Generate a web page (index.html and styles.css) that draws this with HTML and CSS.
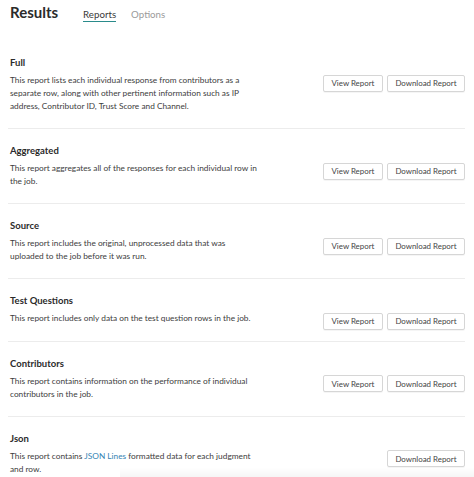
FILE: index.html
```html
<!DOCTYPE html>
<html lang="en">
<head>
  <meta charset="UTF-8" />
  <meta name="viewport" content="width=device-width, initial-scale=1" />
  <title>Results - Reports</title>
  <link rel="stylesheet" href="styles.css">
</head>
<body>

  <div class="header">
    <h1>Results</h1>
    <nav class="tabs">
      <a href="#" class="tab active">Reports</a>
      <a href="#" class="tab">Options</a>
    </nav>
  </div>

  <div class="reports">
    <div class="report">
      <h3>Full</h3>
      <div class="report-body">
        <p>This report lists each individual response from contributors as a separate row, along with other pertinent information such as IP address, Contributor ID, Trust Score and Channel.</p>
        <div class="actions">
          <button>View Report</button>
          <button>Download Report</button>
        </div>
      </div>
    </div>

    <div class="report">
      <h3>Aggregated</h3>
      <div class="report-body">
        <p>This report aggregates all of the responses for each individual row in the job.</p>
        <div class="actions">
          <button>View Report</button>
          <button>Download Report</button>
        </div>
      </div>
    </div>

    <div class="report">
      <h3>Source</h3>
      <div class="report-body">
        <p>This report includes the original, unprocessed data that was uploaded to the job before it was run.</p>
        <div class="actions">
          <button>View Report</button>
          <button>Download Report</button>
        </div>
      </div>
    </div>

    <div class="report">
      <h3>Test Questions</h3>
      <div class="report-body">
        <p>This report includes only data on the test question rows in the job.</p>
        <div class="actions">
          <button>View Report</button>
          <button>Download Report</button>
        </div>
      </div>
    </div>

    <div class="report">
      <h3>Contributors</h3>
      <div class="report-body">
        <p>This report contains information on the performance of individual contributors in the job.</p>
        <div class="actions">
          <button>View Report</button>
          <button>Download Report</button>
        </div>
      </div>
    </div>

    <div class="report">
      <h3>Json</h3>
      <div class="report-body">
        <p>This report contains <a href="#">JSON Lines</a> formatted data for each judgment and row.</p>
        <div class="actions">
          <button>Download Report</button>
        </div>
      </div>
    </div>
  </div>

</body>
</html>
```

FILE: styles.css
```css
body, html {
  margin: 0;
  padding: 0;
  font-family: Lato, 'Open Sans', sans-serif;
  color: #3d3d3d;
  background: white;
}

.header {
  display: flex;
  align-items: baseline;
  padding: 2px 10px 0 10px;
  height: 41px;
  box-sizing: border-box;
}

.header h1 {
  margin: 0;
  font-size: 15px;
  font-weight: 700;
  color: #2b2b2b;
  line-height: 20px;
}

.tabs {
  display: flex;
  gap: 15px;
  margin-left: 25px;
}

.tab {
  font-size: 9.7px;
  color: #9a9a9a;
  text-decoration: none;
  padding-bottom: 1px;
  border-bottom: 1px solid transparent;
}

.tab.active {
  color: #3a3a3a;
  border-bottom-color: #2a8b8b;
}

.reports {
  margin: 0 9px 0 8px;
}

.report {
  padding: 16px 0 15px 2px;
  border-bottom: 1px solid #ececec;
}

.report:last-child {
  border-bottom: none;
}

.report h3 {
  margin: 0 0 5px 0;
  font-size: 9.5px;
  line-height: 12px;
  font-weight: 700;
  color: #2b2b2b;
}

.report-body {
  display: flex;
  align-items: flex-start;
}

.report-body p {
  margin: 0;
  width: 247px;
  font-size: 8.3px;
  line-height: 13px;
}

.report-body p a {
  color: #3584b4;
  text-decoration: none;
}

/* buttons hang below a one-line description without growing the row */
.actions {
  display: flex;
  gap: 4px;
  height: 13px;
  margin-left: auto;
  margin-top: 0.5px;
}

.actions button {
  height: 17px;
  padding: 0 7.5px;
  font-family: inherit;
  font-size: 7.9px;
  color: #444;
  background: white;
  border: 1px solid #d6d6d6;
  border-radius: 2px;
  box-shadow: 0 1px 0 rgba(0, 0, 0, 0.04);
  cursor: pointer;
}

/* faint shade where the list runs under the window edge */
body::after {
  content: "";
  position: fixed;
  left: 120px;
  right: 0;
  bottom: 0;
  height: 10px;
  background: linear-gradient(to bottom, rgba(0, 0, 0, 0), rgba(0, 0, 0, 0.035));
  pointer-events: none;
}
```
